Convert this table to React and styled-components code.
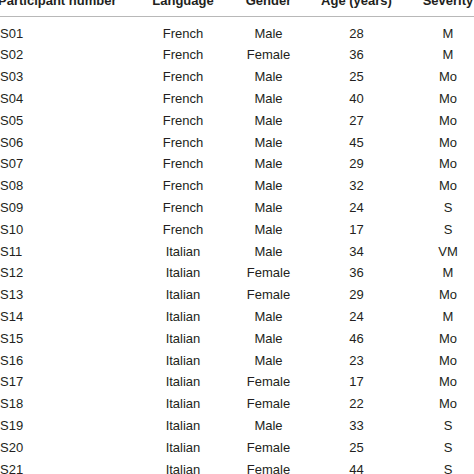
import React from "react";
import styled, { createGlobalStyle } from "styled-components";

const Global = createGlobalStyle`
  html, body { margin: 0; padding: 0; background: #fff; overflow: hidden; }
  body { width: 474px; height: 474px; }
`;

const Table = styled.div`
  margin-top: -7.2px;
  width: 494px;
  font-family: "Liberation Sans", Arial, sans-serif;
  font-size: 13px;
  color: #231f20;
`;

const cols = "140px 86px 85px 91px 92px";

const HeaderRow = styled.div`
  display: grid;
  grid-template-columns: ${cols};
  line-height: 16px;
  padding-bottom: 7.2px;
  border-bottom: 1px solid #b8b8b8;
  font-weight: bold;
`;

const Body = styled.div`
  padding-top: 5.6px;
`;

const Row = styled.div`
  display: grid;
  grid-template-columns: ${cols};
  height: 21.8px;
  line-height: 21.8px;
`;

const Cell = styled.div`
  text-align: ${(p) => (p.$left ? "left" : "center")};
  white-space: nowrap;
  ${(p) => (p.$indent ? `text-indent: ${p.$indent}px;` : "")}
`;

const rows = [
  ["S01", "French", "Male", "28", "M"],
  ["S02", "French", "Female", "36", "M"],
  ["S03", "French", "Male", "25", "Mo"],
  ["S04", "French", "Male", "40", "Mo"],
  ["S05", "French", "Male", "27", "Mo"],
  ["S06", "French", "Male", "45", "Mo"],
  ["S07", "French", "Male", "29", "Mo"],
  ["S08", "French", "Male", "32", "Mo"],
  ["S09", "French", "Male", "24", "S"],
  ["S10", "French", "Male", "17", "S"],
  ["S11", "Italian", "Male", "34", "VM"],
  ["S12", "Italian", "Female", "36", "M"],
  ["S13", "Italian", "Female", "29", "Mo"],
  ["S14", "Italian", "Male", "24", "M"],
  ["S15", "Italian", "Male", "46", "Mo"],
  ["S16", "Italian", "Male", "23", "Mo"],
  ["S17", "Italian", "Female", "17", "Mo"],
  ["S18", "Italian", "Female", "22", "Mo"],
  ["S19", "Italian", "Male", "33", "S"],
  ["S20", "Italian", "Female", "25", "S"],
  ["S21", "Italian", "Female", "44", "S"],
];

export default function App() {
  return (
    <>
      <Global />
      <Table>
        <HeaderRow>
          <Cell $left $indent={-2}>Participant number</Cell>
          <Cell>Language</Cell>
          <Cell>Gender</Cell>
          <Cell>Age (years)</Cell>
          <Cell>Severity</Cell>
        </HeaderRow>
        <Body>
          {rows.map((r) => (
            <Row key={r[0]}>
              <Cell $left>{r[0]}</Cell>
              <Cell>{r[1]}</Cell>
              <Cell>{r[2]}</Cell>
              <Cell>{r[3]}</Cell>
              <Cell>{r[4]}</Cell>
            </Row>
          ))}
        </Body>
      </Table>
    </>
  );
}
